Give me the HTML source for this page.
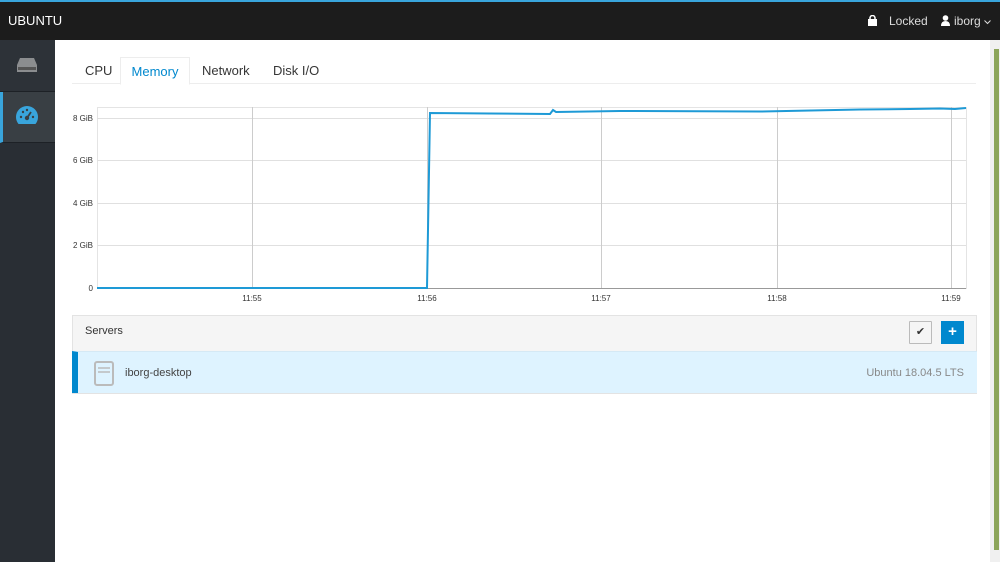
<!DOCTYPE html>
<html><head><style>
*{margin:0;padding:0;box-sizing:border-box}
body{width:1000px;height:562px;overflow:hidden;font-family:"Liberation Sans",sans-serif;background:#fff;position:relative}
.top{position:absolute;left:0;top:0;width:1000px;height:40px;background:#1c1c1c;border-top:2px solid #39a5dc;color:#fff}
.side{position:absolute;left:0;top:40px;width:55px;height:522px;background:#292e34}
.tab{position:absolute;top:57px;height:27px;font-size:13px;color:#363636;padding-top:6px}
</style></head><body>
<div class="top">
<div style="position:absolute;left:8px;top:11px;font-size:13px">UBUNTU</div>
<svg style="position:absolute;left:868px;top:13px" width="9" height="11"><rect x="0" y="4" width="9" height="7" fill="#fff"/><path d="M2 5V3a2.5 2.5 0 0 1 5 0v2" stroke="#fff" stroke-width="1.5" fill="none"/></svg>
<div style="position:absolute;left:889px;top:12px;font-size:12px;color:#ddd">Locked</div>
<svg style="position:absolute;left:941px;top:13px" width="9" height="11"><circle cx="4.5" cy="3" r="2.8" fill="#fff"/><path d="M0 11q0-5 4.5-5t4.5 5z" fill="#fff"/></svg>
<div style="position:absolute;left:954px;top:12px;font-size:12px;color:#ddd">iborg</div>
<svg style="position:absolute;left:984px;top:18px" width="7" height="5"><path d="M0.5 0.5l3 3 3-3" stroke="#ddd" fill="none"/></svg>
</div>
<div class="side">
<div style="position:absolute;left:0;top:0;width:55px;height:52px;background:#2d3238;border-bottom:1px solid #1d2126"></div>
<svg style="position:absolute;left:17px;top:18px" width="20" height="14"><path d="M3 0h14l3 7v7H0V7z" fill="#8b8d8f"/><rect x="1" y="9" width="18" height="3" fill="#555"/></svg>
<div style="position:absolute;left:0;top:52px;width:55px;height:51px;background:#393f44;border-left:3px solid #39a5dc;border-bottom:1px solid #1d2126"></div>
<svg style="position:absolute;left:16px;top:66px" width="22" height="18" viewBox="0 0 22 18"><path d="M11 0A11 11 0 0 0 0 11c0 3 1 5 2.5 7h17C21 16 22 14 22 11A11 11 0 0 0 11 0z" fill="#39a5dc"/><circle cx="11" cy="12" r="2.2" fill="#393f44"/><path d="M11 12l4-6" stroke="#393f44" stroke-width="1.8"/><circle cx="5" cy="11" r="1.2" fill="#393f44"/><circle cx="7" cy="6" r="1.2" fill="#393f44"/><circle cx="11" cy="4" r="1.2" fill="#393f44"/><circle cx="17" cy="11" r="1.2" fill="#393f44"/></svg>
</div>
<div style="position:absolute;left:72px;top:83px;width:904px;height:1px;background:#ededed"></div>
<div class="tab" style="left:85px">CPU</div>
<div class="tab" style="left:120px;width:70px;border:1px solid #ededed;border-bottom:1px solid #fff;background:#fff;color:#0088ce;text-align:center;height:28px">Memory</div>
<div class="tab" style="left:202px">Network</div>
<div class="tab" style="left:273px">Disk I/O</div>
<svg style="position:absolute;left:60px;top:100px" width="920" height="210" font-family="Liberation Sans" font-size="8" fill="#333">
<rect x="37.5" y="7.5" width="869" height="181" fill="none" stroke="#e4e4e4"/>
<g stroke="#e0e0e0"><line x1="37" y1="18.5" x2="906" y2="18.5"/><line x1="37" y1="60.5" x2="906" y2="60.5"/><line x1="37" y1="103.5" x2="906" y2="103.5"/><line x1="37" y1="145.5" x2="906" y2="145.5"/>
<g stroke="#ccc"><line x1="192.5" y1="7" x2="192.5" y2="188"/><line x1="367.5" y1="7" x2="367.5" y2="188"/><line x1="541.5" y1="7" x2="541.5" y2="188"/><line x1="717.5" y1="7" x2="717.5" y2="188"/><line x1="891.5" y1="7" x2="891.5" y2="188"/></g></g>
<line x1="37" y1="188.5" x2="906" y2="188.5" stroke="#999"/>
<g text-anchor="end"><text x="33" y="21">8 GiB</text><text x="33" y="63">6 GiB</text><text x="33" y="106">4 GiB</text><text x="33" y="148">2 GiB</text><text x="33" y="191">0</text></g>
<g text-anchor="middle"><text x="192" y="201">11:55</text><text x="367" y="201">11:56</text><text x="541" y="201">11:57</text><text x="717" y="201">11:58</text><text x="891" y="201">11:59</text></g>
<path d="M37 188H367L370 13L430 13.5L490 14L493 10L496 12L560 11L700 11.5L800 9.5L850 9L880 8.5L895 9L906 8" fill="none" stroke="#1e9ad6" stroke-width="2"/>
</svg>
<div style="position:absolute;left:72px;top:315px;width:905px;height:79px;border:1px solid #e3e3e3;background:#f5f5f5"></div>
<div style="position:absolute;left:85px;top:325px;font-size:11px;color:#333">Servers</div>
<div style="position:absolute;left:909px;top:321px;width:23px;height:23px;border:1px solid #bbb;background:#f5f5f5;border-radius:1px;font-size:11px;text-align:center;line-height:21px;color:#333">✔</div>
<div style="position:absolute;left:941px;top:321px;width:23px;height:23px;background:#0088ce;color:#fff;font-size:15px;font-weight:bold;text-align:center;line-height:22px">+</div>
<div style="position:absolute;left:72px;top:351px;width:905px;height:42px;background:#def3ff;border-left:6px solid #0088ce;border-top:1px solid #d5e9f5"></div>
<svg style="position:absolute;left:94px;top:361px" width="20" height="25"><rect x="1" y="1" width="18" height="23" rx="2" fill="none" stroke="#bbb" stroke-width="2"/><line x1="4" y1="7" x2="16" y2="7" stroke="#bbb" stroke-width="1.5"/><line x1="4" y1="11" x2="16" y2="11" stroke="#bbb" stroke-width="1.5"/></svg>
<div style="position:absolute;left:125px;top:367px;font-size:11px;color:#444">iborg-desktop</div>
<div style="position:absolute;right:36px;top:367px;font-size:11px;color:#888">Ubuntu 18.04.5 LTS</div>
<div style="position:absolute;left:990px;top:40px;width:10px;height:522px;background:#f0f0f0"></div>
<div style="position:absolute;left:994px;top:49px;width:5px;height:501px;background:#8ca55a"></div>
</body></html>
